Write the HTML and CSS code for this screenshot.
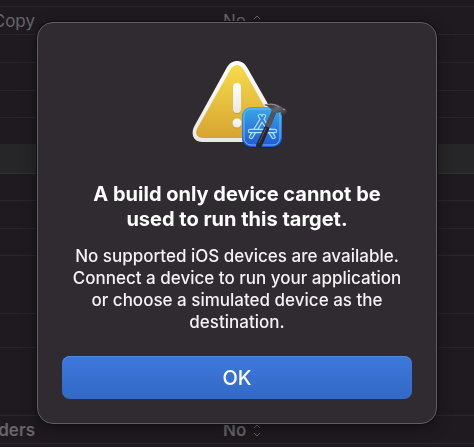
FILE: index.html
```
<!DOCTYPE html>
<html lang="en">
<head>
  <meta charset="UTF-8">
  <meta name="viewport" content="width=device-width, initial-scale=1">
  <title>Build Settings</title>
  <link rel="stylesheet" href="styles.css">
</head>
<body>
  <main class="settings">
    <div class="row"></div>
    <div class="row">
      <label class="name" for="copy">Copy</label>
      <div class="value">
        <select id="copy"><option>No</option></select>
        <svg class="arrows" viewBox="0 0 8 14"><path d="M1 5l3-3 3 3M1 10l3 3 3-3"/></svg>
      </div>
    </div>
    <div class="row"></div>
    <div class="row"></div>
    <div class="row"></div>
    <div class="row plain"></div>
    <div class="row selected"></div>
    <div class="row"></div>
    <div class="row"></div>
    <div class="row"></div>
    <div class="row"></div>
    <div class="row"></div>
    <div class="row"></div>
    <div class="row bold">
      <label class="name" for="headers">ders</label>
      <div class="value">
        <select id="headers"><option>No</option></select>
        <svg class="arrows" viewBox="0 0 8 14"><path d="M1 5l3-3 3 3M1 10l3 3 3-3"/></svg>
      </div>
    </div>
  </main>

  <div class="overlay">
    <div class="alert" role="alertdialog" aria-labelledby="title" aria-describedby="message">
      <svg class="icon" viewBox="0 0 104 96" aria-hidden="true">
        <defs>
          <linearGradient id="yellow" x1="0" y1="0" x2="0" y2="1">
            <stop offset="0" stop-color="#f6dc4b"/>
            <stop offset="1" stop-color="#d7a431"/>
          </linearGradient>
          <linearGradient id="white" x1="0" y1="0" x2="0" y2="1">
            <stop offset="0" stop-color="#ffffff"/>
            <stop offset="1" stop-color="#e9e7e8"/>
          </linearGradient>
          <linearGradient id="blue" x1="0" y1="0" x2="0" y2="1">
            <stop offset="0" stop-color="#39a9e6"/>
            <stop offset="1" stop-color="#2158d4"/>
          </linearGradient>
          <linearGradient id="steel" x1="0" y1="0" x2="1" y2="1">
            <stop offset="0" stop-color="#24242a"/>
            <stop offset="0.5" stop-color="#66646c"/>
            <stop offset="1" stop-color="#28272d"/>
          </linearGradient>
        </defs>
        <!-- warning triangle -->
        <path fill="url(#white)" d="M41 9C44 3 48 1 52 1s8 2 11 8l32 56c5 9 0 17-9 17H17C8 82 5 73 10 65z"/>
        <path fill="url(#yellow)" d="M44 12c3-5 5-7 8-7s5 2 8 7l31 55c3 6 0 11-6 11H18c-6 0-9-5-5-11z"/>
        <rect x="48" y="24" width="8" height="30" rx="4" fill="#b88d2e" opacity=".6"/>
        <rect x="48" y="23" width="8" height="30" rx="4" fill="url(#white)"/>
        <circle cx="52" cy="64" r="4.5" fill="#b88d2e" opacity=".6"/>
        <circle cx="52" cy="63" r="4.5" fill="url(#white)"/>
        <!-- app tile -->
        <rect x="57" y="48" width="40" height="40" rx="9" fill="#1d1b22" opacity=".5"/>
        <rect x="57" y="47" width="40" height="40" rx="9" fill="url(#blue)"/>
        <rect x="59" y="49" width="36" height="36" rx="7" fill="none" stroke="#6dbdf3" stroke-width="1"/>
        <g fill="none" stroke-linecap="round">
          <path stroke="#b3e1ff" stroke-width="4.4" d="M75 56l13.500 21M79 56L66 77"/>
          <path stroke="#2e82df" stroke-width="2.200" d="M75 56l13.500 21M79 56L66 77"/>
          <path stroke="#b3e1ff" stroke-width="4.400" d="M65 71h25"/>
          <path stroke="#2e82df" stroke-width="2.200" d="M65 71h25"/>
        </g>
        <!-- hammer -->
        <path fill="#26262c" d="M87 51l4 2-14 33c-1 3-7 2-6-1z"/>
        <path fill="#55545c" d="M87 51l4 2-6 15-5-2z"/>
        <path stroke="#5a5961" stroke-width="1" d="M81 68l-7 15"/>
        <path fill="url(#steel)" d="M79 45c6-3 12-2 16 1l3 2 3 1 1 3-3 4-3-1v-3l-4 1-5-2c-1-3-4-5-8-6z"/>
        <path fill="none" stroke="#a7a4aa" stroke-width="1" d="M81 45c6-2 10 0 13 2M98 49l2 1"/>
      </svg>
      <h1 class="title" id="title">A build only device cannot be used to run this target.</h1>
      <p class="message" id="message">No supported iOS devices are available. Connect a device to run your application or choose a simulated device as the destination.</p>
      <button class="ok" type="button">OK</button>
    </div>
  </div>
</body>
</html>
```
FILE: styles.css
```
* {
  box-sizing: border-box;
}
body {
  margin: 0;
  min-height: 100vh;
  overflow: hidden;
  background: #1e1a1f;
  color: #67646a;
  font-family: Inter, "Liberation Sans", sans-serif;
}
.settings {
  display: grid;
  grid-template-rows: 7px 28px 28px 28px 27px 26px 30px 27px 28px 27px 58px 34px 68px 28px;
}
.row {
  display: grid;
  grid-template-columns: 35px 1fr;
  column-gap: 188px;
  align-items: center;
  border-bottom: 1px solid #29252b;
  font-size: 17px;
}
.plain {
  border-bottom: 0;
}
.selected {
  background: #262628;
  border-bottom-color: #313134;
}
.bold {
  font-weight: 600;
}
.name {
  display: flex;
  justify-content: flex-end;
}
.value {
  display: flex;
  align-items: center;
  gap: 6px;
}
.value select {
  appearance: none;
  padding: 0;
  border: 0;
  background: none;
  color: inherit;
  font: inherit;
}
.arrows {
  width: 8px;
  height: 14px;
  fill: none;
  stroke: #67646a;
  stroke-width: 1;
}
.overlay {
  position: fixed;
  inset: 0;
  display: flex;
  align-items: flex-start;
  justify-content: center;
  padding: 22px 37px;
}
.alert {
  display: flex;
  flex-direction: column;
  align-items: center;
  width: 100%;
  max-width: 400px;
  padding: 37px 24px 24px;
  border: 1px solid #615e63;
  border-radius: 16px;
  background: #302b30;
  box-shadow: 0 0 0 1px #121014, 0 4px 16px rgba(0, 0, 0, 0.4);
  color: #f4f2f4;
  text-align: center;
}
.icon {
  width: 104px;
  height: 96px;
}
.title {
  margin: 26px 0 13px;
  padding: 0 24px;
  color: #fff;
  font-size: 20px;
  font-weight: 700;
  line-height: 25px;
}
.message {
  margin: 0 0 23px;
  padding: 0 8px;
  font-size: 17px;
  font-weight: 500;
  line-height: 22px;
}
.ok {
  width: 100%;
  height: 43px;
  padding: 0;
  border: 0;
  border-radius: 8px;
  background: linear-gradient(#3d78dc, #3269c6);
  box-shadow: inset 0 1px #5287e0;
  color: #fff;
  font-family: inherit;
  font-size: 20px;
  font-weight: 500;
}
```
